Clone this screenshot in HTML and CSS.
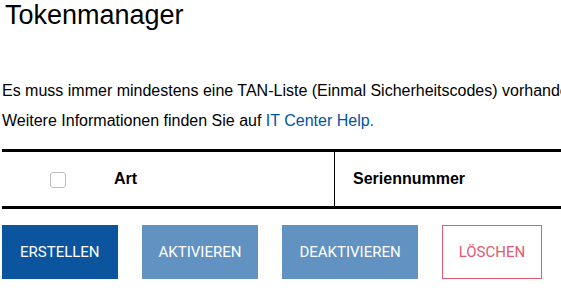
FILE: index.html
```html
<!DOCTYPE html>
<html lang="de">
<head>
    <meta charset="UTF-8">
    <meta name="viewport" content="width=device-width, initial-scale=1.0">
    <title>Tokenmanager</title>
    <link rel="stylesheet" href="styles.css">
</head>
<body>
    <div class="page">
        <h1>Tokenmanager</h1>
        <div class="info">
            <p>Es muss immer mindestens eine TAN-Liste (Einmal Sicherheitscodes) vorhanden sein.</p>
            <p>Weitere Informationen finden Sie auf <a href="#">IT Center Help.</a></p>
        </div>
        <table class="token-table">
            <thead>
                <tr>
                    <th class="col-check"><input type="checkbox" class="check"></th>
                    <th class="col-type">Art</th>
                    <th class="col-serial">Seriennummer</th>
                </tr>
            </thead>
        </table>
        <div class="actions">
            <button class="btn btn-primary" type="button">ERSTELLEN</button>
            <button class="btn btn-disabled" type="button">AKTIVIEREN</button>
            <button class="btn btn-disabled" type="button">DEAKTIVIEREN</button>
            <button class="btn btn-danger" type="button">LÖSCHEN</button>
        </div>
    </div>
</body>
</html>
```

FILE: styles.css
```css
body {
    margin: 0;
    background-color: #fff;
    color: #000;
    font-family: "Liberation Sans", Arial, sans-serif;
    overflow: hidden;
}

.page {
    padding: 0 0 0 2px;
    width: 700px;
}

h1 {
    margin: 0 0 0 3px;
    font-size: 27px;
    font-weight: normal;
    line-height: 31px;
}

.info {
    margin-top: 45px;
}

.info p {
    margin: 0;
    font-size: 16px;
    line-height: 30px;
    white-space: nowrap;
}

.info a {
    color: #00549f;
    text-decoration: none;
}

.token-table {
    margin-top: 13px;
    width: 100%;
    border-collapse: collapse;
    border-top: 3px solid #000;
    border-bottom: 3px solid #000;
}

.token-table th {
    height: 54px;
    padding: 0;
    font-size: 16px;
    font-weight: bold;
    text-align: left;
    vertical-align: middle;
}

.col-check {
    width: 94px;
    padding-left: 48px !important;
    box-sizing: border-box;
}

.col-type {
    width: 220px;
    padding-left: 18px !important;
    border-right: 1px solid #000;
}

.col-serial {
    padding-left: 18px !important;
}

.check {
    appearance: none;
    display: block;
    width: 16px;
    height: 16px;
    margin: 1px 0 0 0;
    border: 1px solid #bdbdbd;
    border-radius: 3px;
    background: #fff;
}

.actions {
    margin-top: 16px;
    display: flex;
    gap: 24px;
}

.btn {
    height: 54px;
    padding: 0 16px;
    border: 1px solid transparent;
    font-family: Roboto, "Liberation Sans", sans-serif;
    font-size: 15px;
    color: #fff;
    cursor: pointer;
}

.btn-primary {
    padding: 0 17px;
    background-color: #0b559e;
    border-color: #0b559e;
}

.btn-disabled {
    background-color: #6292c1;
    border-color: #6292c1;
}

.btn-danger {
    background-color: #fff;
    border-color: #e15a70;
    color: #e15a70;
}
```
